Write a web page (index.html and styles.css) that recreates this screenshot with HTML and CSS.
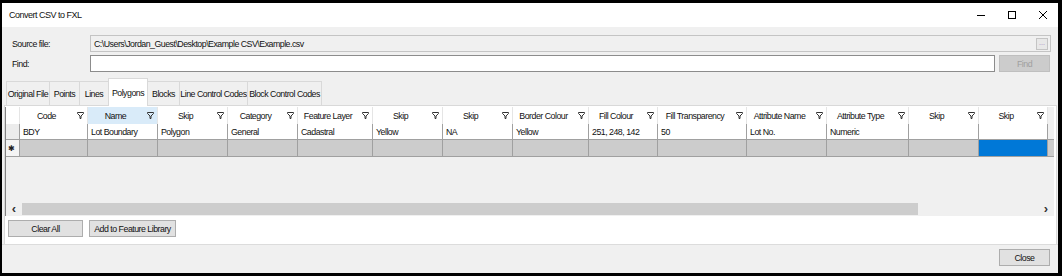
FILE: index.html
```html
<!DOCTYPE html>
<html>
<head>
<meta charset="utf-8">
<link rel="stylesheet" href="styles.css">
</head>
<body>
<div class="window">
  <div class="titlebar">
    <span class="title">Convert CSV to FXL</span>
    <div class="controls">
      <svg class="ctl" width="10" height="10" viewBox="0 0 10 10"><path d="M1 5.5H9" stroke="#000" stroke-width="1"/></svg>
      <svg class="ctl" width="10" height="10" viewBox="0 0 10 10"><rect x="1.5" y="1.5" width="7" height="7" fill="none" stroke="#000" stroke-width="1"/></svg>
      <svg class="ctl" width="10" height="10" viewBox="0 0 10 10"><path d="M1 1L9 9M9 1L1 9" stroke="#000" stroke-width="1"/></svg>
    </div>
  </div>
  <div class="content">
    <div class="form-row">
      <span class="label">Source file:</span>
      <div class="source-field"><span class="path">C:\Users\Jordan_Guest\Desktop\Example CSV\Example.csv</span><span class="browse">...</span></div>
    </div>
    <div class="form-row find-row">
      <span class="label">Find:</span>
      <div class="find-input"></div>
      <div class="btn disabled find-btn">Find</div>
    </div>
    <div class="tabs">
      <div class="tab w1">Original File</div>
      <div class="tab w2">Points</div>
      <div class="tab w3">Lines</div>
      <div class="tab active w4">Polygons</div>
      <div class="tab w5">Blocks</div>
      <div class="tab w6">Line Control Codes</div>
      <div class="tab w7">Block Control Codes</div>
    </div>
    <div class="tabpage">
      <div class="grid">
        <div class="rows">
          <div class="row header">
            <div class="cell rh"></div>
            <div class="cell hc"><span class="hl">Code</span><svg class="filt" width="7" height="7" viewBox="0 0 7 7"><path d="M0.5 0.5H6.5V1.5L4 4V6.5H3V4L0.5 1.5Z" fill="none" stroke="#333" stroke-width="1"/></svg></div>
            <div class="cell hc hover"><span class="hl">Name</span><svg class="filt" width="7" height="7" viewBox="0 0 7 7"><path d="M0.5 0.5H6.5V1.5L4 4V6.5H3V4L0.5 1.5Z" fill="none" stroke="#333" stroke-width="1"/></svg></div>
            <div class="cell hc"><span class="hl">Skip</span><svg class="filt" width="7" height="7" viewBox="0 0 7 7"><path d="M0.5 0.5H6.5V1.5L4 4V6.5H3V4L0.5 1.5Z" fill="none" stroke="#333" stroke-width="1"/></svg></div>
            <div class="cell hc"><span class="hl">Category</span><svg class="filt" width="7" height="7" viewBox="0 0 7 7"><path d="M0.5 0.5H6.5V1.5L4 4V6.5H3V4L0.5 1.5Z" fill="none" stroke="#333" stroke-width="1"/></svg></div>
            <div class="cell hc"><span class="hl">Feature Layer</span><svg class="filt" width="7" height="7" viewBox="0 0 7 7"><path d="M0.5 0.5H6.5V1.5L4 4V6.5H3V4L0.5 1.5Z" fill="none" stroke="#333" stroke-width="1"/></svg></div>
            <div class="cell hc"><span class="hl">Skip</span><svg class="filt" width="7" height="7" viewBox="0 0 7 7"><path d="M0.5 0.5H6.5V1.5L4 4V6.5H3V4L0.5 1.5Z" fill="none" stroke="#333" stroke-width="1"/></svg></div>
            <div class="cell hc"><span class="hl">Skip</span><svg class="filt" width="7" height="7" viewBox="0 0 7 7"><path d="M0.5 0.5H6.5V1.5L4 4V6.5H3V4L0.5 1.5Z" fill="none" stroke="#333" stroke-width="1"/></svg></div>
            <div class="cell hc"><span class="hl">Border Colour</span><svg class="filt" width="7" height="7" viewBox="0 0 7 7"><path d="M0.5 0.5H6.5V1.5L4 4V6.5H3V4L0.5 1.5Z" fill="none" stroke="#333" stroke-width="1"/></svg></div>
            <div class="cell hc"><span class="hl">Fill Colour</span><svg class="filt" width="7" height="7" viewBox="0 0 7 7"><path d="M0.5 0.5H6.5V1.5L4 4V6.5H3V4L0.5 1.5Z" fill="none" stroke="#333" stroke-width="1"/></svg></div>
            <div class="cell hc"><span class="hl">Fill Transparency</span><svg class="filt" width="7" height="7" viewBox="0 0 7 7"><path d="M0.5 0.5H6.5V1.5L4 4V6.5H3V4L0.5 1.5Z" fill="none" stroke="#333" stroke-width="1"/></svg></div>
            <div class="cell hc"><span class="hl">Attribute Name</span><svg class="filt" width="7" height="7" viewBox="0 0 7 7"><path d="M0.5 0.5H6.5V1.5L4 4V6.5H3V4L0.5 1.5Z" fill="none" stroke="#333" stroke-width="1"/></svg></div>
            <div class="cell hc"><span class="hl">Attribute Type</span><svg class="filt" width="7" height="7" viewBox="0 0 7 7"><path d="M0.5 0.5H6.5V1.5L4 4V6.5H3V4L0.5 1.5Z" fill="none" stroke="#333" stroke-width="1"/></svg></div>
            <div class="cell hc"><span class="hl">Skip</span><svg class="filt" width="7" height="7" viewBox="0 0 7 7"><path d="M0.5 0.5H6.5V1.5L4 4V6.5H3V4L0.5 1.5Z" fill="none" stroke="#333" stroke-width="1"/></svg></div>
            <div class="cell hc"><span class="hl">Skip</span><svg class="filt" width="7" height="7" viewBox="0 0 7 7"><path d="M0.5 0.5H6.5V1.5L4 4V6.5H3V4L0.5 1.5Z" fill="none" stroke="#333" stroke-width="1"/></svg></div>
            <div class="cell hc extra"></div>
          </div>
          <div class="row data">
            <div class="cell rh"></div>
            <div class="cell">BDY</div>
            <div class="cell">Lot Boundary</div>
            <div class="cell">Polygon</div>
            <div class="cell">General</div>
            <div class="cell">Cadastral</div>
            <div class="cell">Yellow</div>
            <div class="cell">NA</div>
            <div class="cell">Yellow</div>
            <div class="cell">251, 248, 142</div>
            <div class="cell">50</div>
            <div class="cell">Lot No.</div>
            <div class="cell">Numeric</div>
            <div class="cell"></div>
            <div class="cell"></div>
            <div class="cell extra"></div>
          </div>
          <div class="row newrow">
            <div class="cell rh star">✱</div>
            <div class="cell"></div>
            <div class="cell"></div>
            <div class="cell"></div>
            <div class="cell"></div>
            <div class="cell"></div>
            <div class="cell"></div>
            <div class="cell"></div>
            <div class="cell"></div>
            <div class="cell"></div>
            <div class="cell"></div>
            <div class="cell"></div>
            <div class="cell"></div>
            <div class="cell"></div>
            <div class="cell selected"></div>
            <div class="cell extra"></div>
          </div>
        </div>
        <div class="hscroll">
          <span class="arrow">&lsaquo;</span>
          <div class="track"><div class="thumb"></div></div>
          <span class="arrow">&rsaquo;</span>
        </div>
      </div>
      <div class="actions">
        <div class="btn clear-btn">Clear All</div>
        <div class="btn add-btn">Add to Feature Library</div>
      </div>
    </div>
    <div class="footer">
      <div class="btn close-btn">Close</div>
    </div>
  </div>
</div>
</body>
</html>
```

FILE: styles.css
```css
* { box-sizing: border-box; }
html, body { margin: 0; padding: 0; }
body {
  width: 1062px;
  height: 276px;
  overflow: hidden;
  font-family: "Liberation Sans", Arial, sans-serif;
  font-size: 8.8px;
  letter-spacing: -0.5px;
  color: #111;
  background: #000;
}
.window {
  width: 1062px;
  height: 276px;
  border-style: solid;
  border-color: #000;
  border-width: 3px 4px 3px 2px;
  display: flex;
  flex-direction: column;
  background: #f0f0f0;
}
.titlebar {
  height: 24px;
  background: #fff;
  display: flex;
  align-items: center;
  padding-left: 7px;
}
.title { flex: 1; font-size: 9px; }
.controls { display: flex; align-items: center; padding-right: 10px; gap: 21px; }
.ctl { display: block; }
.content {
  flex: 1;
  display: flex;
  flex-direction: column;
  padding-top: 8px;
}
.form-row {
  display: flex;
  align-items: center;
  height: 17px;
  padding-left: 10px;
  padding-right: 7px;
}
.find-row { margin-top: 3px; padding-right: 8px; }
.label { width: 78px; flex: none; }
.source-field {
  flex: 1;
  height: 17px;
  border: 1px solid #c4c4c4;
  background: #f0f0f0;
  display: flex;
  align-items: center;
  padding-left: 3px;
  padding-right: 2px;
}
.path { flex: 1; white-space: nowrap; }
.browse {
  width: 12px;
  height: 12px;
  border: 1px solid #c4c4c4;
  background: #e8e8e8;
  color: #a080c0;
  font-size: 7px;
  line-height: 8px;
  letter-spacing: 0;
  text-align: center;
}
.find-input {
  flex: 1;
  height: 17px;
  background: #fff;
  border: 1px solid #8c8c8c;
  margin-right: 4px;
}
.btn {
  height: 17px;
  background: #e1e1e1;
  border: 1px solid #adadad;
  display: flex;
  align-items: center;
  justify-content: center;
  white-space: nowrap;
}
.btn.disabled { background: #cccccc; border-color: #bfbfbf; color: #9f9f9f; }
.find-btn { width: 51px; }
.tabs {
  display: flex;
  align-items: flex-end;
  margin-top: 6px;
  padding-left: 4px;
  height: 28px;
  position: relative;
  z-index: 1;
}
.tab {
  height: 24px;
  margin-bottom: 1px;
  background: #f0f0f0;
  border: 1px solid #d9d9d9;
  border-bottom: none;
  border-right: none;
  display: flex;
  align-items: center;
  justify-content: center;
  white-space: nowrap;
  overflow: hidden;
}
.tab.active {
  height: 28px;
  margin-bottom: 0;
  background: #fff;
  border-right: 1px solid #d9d9d9;
}
.tab.active + .tab { border-left: none; }
.w1 { width: 43px; }
.w2 { width: 30px; }
.w3 { width: 29px; }
.w4 { width: 40px; }
.w5 { width: 31px; }
.w6 { width: 68px; }
.w7 { width: 75px; border-right: 1px solid #d9d9d9; }
.tabpage {
  margin-top: -1px;
  margin-left: 2px;
  margin-right: 1px;
  background: #fff;
  border: 1px solid #d9d9d9;
  border-bottom: none;
  height: 139px;
  padding: 1px 2px 0 0;
  display: flex;
  flex-direction: column;
}
.grid {
  height: 109px;
  background: #f0f0f0;
  border-left: 1px solid #828282;
  display: flex;
  flex-direction: column;
  overflow: hidden;
}
.rows { flex: 1; }
.row {
  display: grid;
  grid-template-columns: 14px 68px 70px 70px 70px 75px 70px 70px 76px 69px 89px 80px 82px 70px 69px 1fr;
}
.cell {
  border-right: 1px solid #a0a0a0;
  padding-left: 3px;
  white-space: nowrap;
  overflow: hidden;
  display: flex;
  align-items: center;
}
.header { height: 17px; background: #fff; }
.header .cell { border-right-color: #e5e5e5; padding-left: 0; }
.header .extra { background: #f0f0f0; }
.hc.hover { background: #d9ebf9; }
.hl { flex: 1; text-align: center; }
.filt { flex: none; margin: 0 3px 0 4px; }
.data { height: 16px; background: #fff; border-bottom: 1px solid #a0a0a0; }
.data .rh { background: #ececec; }
.data .extra { background: #f0f0f0; }
.newrow { height: 17px; background: #cccccc; border-bottom: 1px solid #a0a0a0; }
.newrow .rh { background: #f4f4f4; }
.star { font-size: 8px; padding-left: 2px; color: #222; letter-spacing: 0; }
.cell.selected { background: #0078d7; }
.extra { border-right: none; }
.hscroll {
  height: 14px;
  display: flex;
  align-items: center;
  background: #f0f0f0;
  flex: none;
}
.arrow {
  width: 16px;
  text-align: center;
  font-size: 13px;
  line-height: 12px;
  color: #333;
  font-weight: bold;
  letter-spacing: 0;
}
.track { flex: 1; height: 12px; }
.thumb { width: 896px; height: 12px; background: #cdcdcd; }
.actions {
  display: flex;
  gap: 6px;
  padding-left: 3px;
  margin-top: 4px;
}
.clear-btn { width: 75px; }
.add-btn { width: 87px; }
.footer {
  flex: 1;
  border-top: 1px solid #dcdcdc;
  display: flex;
  justify-content: flex-end;
  align-items: flex-start;
  padding-top: 4px;
  padding-right: 8px;
}
.close-btn { width: 51px; }
```
